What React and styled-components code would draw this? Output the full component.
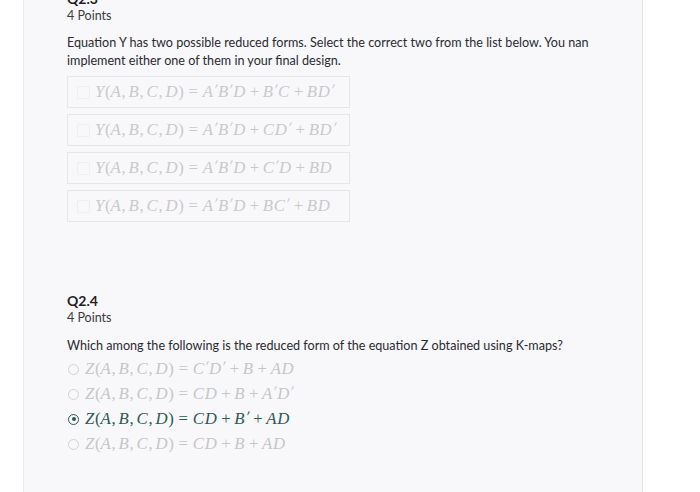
import React from "react";
import styled, { createGlobalStyle } from "styled-components";

const Global = createGlobalStyle`
  html, body { margin: 0; padding: 0; background: #ffffff; }
  body { font-family: "Lato", "Noto Sans", sans-serif; overflow: hidden; }
`;

const Page = styled.div`
  width: 700px;
  height: 492px;
  overflow: hidden;
`;

const Panel = styled.div`
  margin-left: 23px;
  width: 620px;
  height: 520px;
  margin-top: -10px;
  background: #f8f8fa;
  border-left: 1px solid #ececef;
  border-right: 1px solid #e4e4e7;
  padding: 0 0 0 43px;
  box-sizing: border-box;
`;

const Question = styled.section`
  display: flex;
  flex-direction: column;
  margin-bottom: ${(p) => p.$after || 0}px;
`;

const Title = styled.h2`
  margin: 0;
  font-size: 14px;
  line-height: 17px;
  font-weight: 700;
  color: #1f1f24;
`;

const Points = styled.div`
  font-size: 12.5px;
  line-height: 17px;
  color: #3a3a40;
`;

const Prompt = styled.p`
  margin: ${(p) => p.$top}px 0 0 0;
  font-size: 12.6px;
  line-height: 17.5px;
  color: #2a2a30;
  width: 545px;
`;

const CheckList = styled.div`
  display: flex;
  flex-direction: column;
  gap: 6px;
  margin-top: 7px;
`;

const CheckRow = styled.div`
  width: 283px;
  height: 32px;
  box-sizing: border-box;
  border: 1px solid #e6e6e9;
  display: flex;
  align-items: center;
  gap: 5px;
  padding-left: 9px;
`;

const Box = styled.span`
  width: 11px;
  height: 11px;
  border: 1px solid #efeff1;
  border-radius: 1px;
  background: #f8f8fa;
  flex: none;
`;

const RadioList = styled.div`
  display: flex;
  flex-direction: column;
  margin-top: 2px;
`;

const RadioRow = styled.div`
  height: 25px;
  display: flex;
  align-items: center;
  gap: 6px;
  padding-left: 1px;
  color: ${(p) => (p.$on ? "#2d5a54" : "#c6c6c8")};
`;

const Radio = styled.span`
  width: 11px;
  height: 11px;
  box-sizing: border-box;
  border-radius: 50%;
  border: 1.5px solid ${(p) => (p.$on ? "#2d5a54" : "#d2d2d4")};
  display: flex;
  align-items: center;
  justify-content: center;
  flex: none;
  &::after {
    content: "";
    width: 4px;
    height: 4px;
    border-radius: 50%;
    background: ${(p) => (p.$on ? "#2d5a54" : "transparent")};
  }
`;

const MathLine = styled.span`
  font-family: "Liberation Serif", "Times New Roman", serif;
  font-size: 16.8px;
  line-height: 20px;
  white-space: nowrap;
  color: ${(p) => p.$color};
`;

const Var = styled.i`
  font-style: italic;
  margin-right: 0.04em;
`;

const Sym = styled.span`
  margin: 0 ${(p) => p.$space || 0}em 0 ${(p) => p.$left || 0}em;
`;

const Prime = styled.span`
  display: inline-block;
  font-size: 0.95em;
  transform: translateY(-0.12em) skewX(-12deg);
  margin-left: 0.02em;
  margin-right: 0.03em;
`;

function Math({ expr, color }) {
  const out = [];
  for (let i = 0; i < expr.length; i++) {
    const c = expr[i];
    if (/[A-Z]/.test(c)) out.push(<Var key={i}>{c}</Var>);
    else if (c === "'") out.push(<Prime key={i}>′</Prime>);
    else if (c === ",") out.push(<Sym key={i} $space={0.17}>,</Sym>);
    else if (c === "=") out.push(<Sym key={i} $left={0.28} $space={0.28}>=</Sym>);
    else if (c === "+") out.push(<Sym key={i} $left={0.22} $space={0.22}>+</Sym>);
    else out.push(<Sym key={i}>{c}</Sym>);
  }
  return <MathLine $color={color}>{out}</MathLine>;
}

const checks = [
  "Y(A,B,C,D)=A'B'D+B'C+BD'",
  "Y(A,B,C,D)=A'B'D+CD'+BD'",
  "Y(A,B,C,D)=A'B'D+C'D+BD",
  "Y(A,B,C,D)=A'B'D+BC'+BD",
];

const radios = [
  { e: "Z(A,B,C,D)=C'D'+B+AD", on: false },
  { e: "Z(A,B,C,D)=CD+B+A'D'", on: false },
  { e: "Z(A,B,C,D)=CD+B'+AD", on: true },
  { e: "Z(A,B,C,D)=CD+B+AD", on: false },
];

export default function App() {
  return (
    <Page>
      <Global />
      <Panel>
        <Question $after={70}>
          <Title>Q2.3</Title>
          <Points>4 Points</Points>
          <Prompt $top={10}>
            Equation Y has two possible reduced forms. Select the correct two from the list below. You nan
            implement either one of them in your final design.
          </Prompt>
          <CheckList>
            {checks.map((c) => (
              <CheckRow key={c}>
                <Box />
                <Math expr={c} color="#c9c9cb" />
              </CheckRow>
            ))}
          </CheckList>
        </Question>
        <Question>
          <Title>Q2.4</Title>
          <Points>4 Points</Points>
          <Prompt $top={11}>
            Which among the following is the reduced form of the equation Z obtained using K-maps?
          </Prompt>
          <RadioList>
            {radios.map((r) => (
              <RadioRow key={r.e} $on={r.on}>
                <Radio $on={r.on} />
                <Math expr={r.e} color="inherit" />
              </RadioRow>
            ))}
          </RadioList>
        </Question>
      </Panel>
    </Page>
  );
}
